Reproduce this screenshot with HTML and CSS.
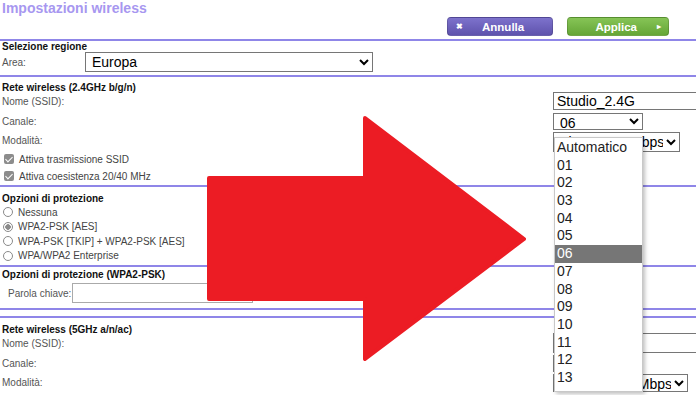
FILE: index.html
```html
<!DOCTYPE html>
<html>
<head>
  <meta charset="UTF-8">
  <title>Impostazioni wireless</title>
  <link rel="stylesheet" href="styles.css">
</head>
<body>

<div class="page">

  <div class="top">
    <h1 class="title">Impostazioni wireless</h1>
    <div class="actions">
      <button class="btn btn-cancel"><span class="btn-ico">&#x2716;</span>Annulla</button>
      <button class="btn btn-apply">Applica<span class="btn-ico">&#x25B8;</span></button>
    </div>
  </div>

  <div class="block">
    <h2 class="head head-first">Selezione regione</h2>
    <div class="area">
      <span class="lbl lbl-area">Area:</span>
      <select class="sel sel-area"><option>Europa</option></select>
    </div>
  </div>

  <div class="block">
    <h2 class="head head-tight">Rete wireless (2.4GHz b/g/n)</h2>
    <div class="field">
      <span class="lbl">Nome (SSID):</span>
      <input class="txt ssid" type="text" value="Studio_2.4G">
    </div>
    <div class="field">
      <span class="lbl">Canale:</span>
      <select class="sel sel-ch"><option>06</option></select>
    </div>
    <div class="field">
      <span class="lbl">Modalità:</span>
      <select class="sel sel-mode"><option>Fino a 300 Mbps</option></select>
    </div>
    <div class="opt opt-check"><span class="box checked"></span>Attiva trasmissione SSID</div>
    <div class="opt opt-check"><span class="box checked"></span>Attiva coesistenza 20/40 MHz</div>
  </div>

  <div class="block block-sec">
    <h2 class="head">Opzioni di protezione</h2>
    <div class="opt opt-radio"><span class="dot"></span>Nessuna</div>
    <div class="opt opt-radio"><span class="dot on"></span>WPA2-PSK [AES]</div>
    <div class="opt opt-radio"><span class="dot"></span>WPA-PSK [TKIP] + WPA2-PSK [AES]</div>
    <div class="opt opt-radio"><span class="dot"></span>WPA/WPA2 Enterprise</div>
  </div>

  <div class="block block-psk">
    <h2 class="head head-psk">Opzioni di protezione (WPA2-PSK)</h2>
    <div class="pass">
      <span class="lbl lbl-pass">Parola chiave:</span>
      <input class="txt pass-in" type="text" value="">
    </div>
  </div>

  <div class="block block-empty"></div>

  <div class="block">
    <h2 class="head head-5g">Rete wireless (5GHz a/n/ac)</h2>
    <div class="field">
      <span class="lbl">Nome (SSID):</span>
      <input class="txt ssid ssid-5g" type="text" value="">
    </div>
    <div class="field">
      <span class="lbl">Canale:</span>
      <select class="sel sel-ch sel-ch5"><option>36</option></select>
    </div>
    <div class="field">
      <span class="lbl">Modalità:</span>
      <select class="sel sel-mode5"><option>Fino a 1300 Mbps</option></select>
    </div>
  </div>

  <!-- arrow drawn over the page -->
  <svg class="arrow" width="319" height="245" viewBox="0 0 319 245">
    <polygon points="2,62 158,62 158,2 317,123 158,243 158,183 2,183"
             fill="#ec1c24" stroke="#ec1c24" stroke-width="4" stroke-linejoin="round"/>
  </svg>

  <!-- open channel list -->
  <div class="popup">
    <div class="item">Automatico</div>
    <div class="item">01</div>
    <div class="item">02</div>
    <div class="item">03</div>
    <div class="item">04</div>
    <div class="item">05</div>
    <div class="item sel-item">06</div>
    <div class="item">07</div>
    <div class="item">08</div>
    <div class="item">09</div>
    <div class="item">10</div>
    <div class="item">11</div>
    <div class="item">12</div>
    <div class="item">13</div>
  </div>

</div>

</body>
</html>
```

FILE: styles.css
```css
body {
  margin: 0;
  padding: 0;
  background-color: #fff;
  font-family: "Liberation Sans", Arial, sans-serif;
  overflow: hidden;
}
.page {
  position: relative;
  width: 696px;
  height: 395px;
  overflow: hidden;
}
.top {
  height: 39px;
}
.title {
  margin: 0;
  padding-left: 2px;
  font-size: 14px;
  line-height: 17px;
  font-weight: bold;
  color: #a797f0;
}
.actions {
  display: flex;
  justify-content: flex-end;
  gap: 14px;
  padding-right: 27px;
}
.btn {
  display: flex;
  align-items: center;
  height: 19px;
  border: 1px solid rgba(0, 0, 0, 0.15);
  border-radius: 4px;
  padding: 0;
  font-family: "Liberation Sans", Arial, sans-serif;
  font-size: 11.5px;
  font-weight: bold;
  color: #fff;
  box-sizing: border-box;
}
.btn-cancel {
  width: 106px;
  background: linear-gradient(#7d72cc, #5f53ad);
}
.btn-cancel .btn-ico {
  font-size: 8px;
  margin: 0 19px 0 8px;
}
.btn-apply {
  width: 102px;
  justify-content: flex-end;
  background: linear-gradient(#86c456, #65a637);
}
.btn-apply .btn-ico {
  font-size: 8px;
  margin: 0 7px 0 20px;
}
.block {
  border-top: 2px solid #8f86e8;
}
.head {
  margin: 6px 0 0 2px;
  font-size: 10px;
  line-height: 12px;
  font-weight: bold;
  color: #111;
}
.head-first {
  margin-top: 0;
  line-height: 11px;
}
.head-tight {
  line-height: 9px;
}
.head-psk {
  margin-top: 2px;
}
.head-5g {
  margin-top: 7px;
  line-height: 9px;
}
.lbl {
  font-size: 10px;
  color: #555;
}
.area {
  display: flex;
  height: 20px;
  align-items: center;
  padding-bottom: 3px;
}
.lbl-area {
  width: 83px;
  padding-left: 2px;
}
.sel {
  margin: 0;
  padding: 0 0 0 2px;
  border: 1px solid #767676;
  border-radius: 0;
  background-color: #fff;
  color: #000;
  font-family: "Liberation Sans", Arial, sans-serif;
  font-size: 14px;
  box-sizing: border-box;
}
.sel-area {
  width: 288px;
  height: 20px;
}
.field {
  display: flex;
  align-items: flex-start;
  height: 19.5px;
}
.field .lbl {
  width: 551px;
  padding-left: 2px;
  line-height: 19.5px;
  flex-shrink: 0;
}
.txt {
  margin: 0;
  padding: 0 3px;
  border: 1px solid #767676;
  font-family: "Liberation Sans", Arial, sans-serif;
  font-size: 14px;
  color: #000;
  box-sizing: border-box;
}
.ssid {
  width: 160px;
  height: 18px;
  flex-shrink: 0;
}
.ssid-5g {
  height: 20px;
  margin-top: -1px;
}
.sel-ch {
  width: 90px;
  height: 17px;
  margin-top: 1px;
}
.sel-mode {
  width: 127px;
  height: 20px;
  margin-top: 1px;
}
.sel-mode5 {
  width: 135px;
  height: 18px;
  margin-top: 1px;
}
.opt {
  display: flex;
  align-items: center;
  font-size: 10px;
  color: #444;
}
.opt-check {
  height: 17px;
}
.block > .opt-check:last-child {
  margin-bottom: 0.5px;
}
.box {
  width: 10px;
  height: 10px;
  margin: 0 5px 0 4px;
  border-radius: 2px;
  background-color: #8c8c8c;
  position: relative;
}
.box.checked::after {
  content: "";
  position: absolute;
  left: 3px;
  top: 1px;
  width: 3px;
  height: 6px;
  border: solid #fff;
  border-width: 0 1.5px 1.5px 0;
  transform: rotate(45deg);
}
.block-sec {
  padding-bottom: 2px;
}
.opt-radio {
  height: 14.5px;
}
.dot {
  width: 8px;
  height: 8px;
  margin: 0 5px 0 3px;
  border: 1px solid #8a8a8a;
  border-radius: 50%;
  box-sizing: content-box;
}
.dot.on {
  background: radial-gradient(circle, #8a8a8a 0 2.5px, #fff 3px);
}
.block-psk {
  padding-bottom: 5px;
}
.pass {
  display: flex;
  align-items: center;
  height: 20px;
  margin-top: 2px;
}
.lbl-pass {
  width: 64px;
  padding-left: 8px;
}
.pass-in {
  width: 181px;
  height: 20px;
  border-color: #aaa;
}
.block-empty {
  height: 6px;
}
.arrow {
  position: absolute;
  left: 207px;
  top: 116px;
}
.popup {
  position: absolute;
  left: 554px;
  top: 137px;
  width: 89px;
  padding: 1px 0 4px;
  background-color: #fff;
  border: 1px solid #c8c8c8;
  box-shadow: 2px 2px 4px rgba(0, 0, 0, 0.25);
  box-sizing: border-box;
}
.item {
  height: 17.7px;
  line-height: 17.7px;
  padding-left: 2px;
  font-size: 14px;
  color: #222;
}
.sel-item {
  background-color: #767676;
  color: #fff;
}
```
